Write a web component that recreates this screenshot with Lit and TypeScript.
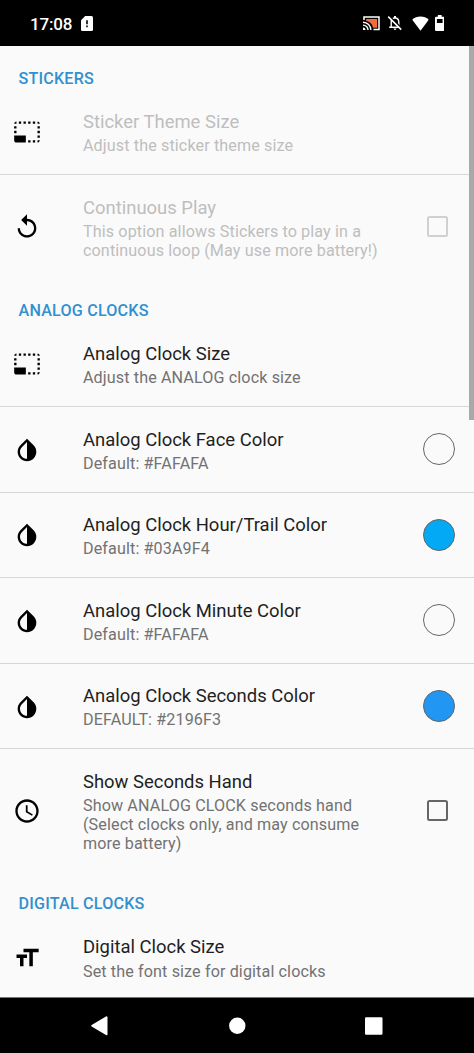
import { LitElement, html, css, nothing } from "lit";
import { customElement, property } from "lit/decorators.js";
import { classMap } from "lit/directives/class-map.js";
import { styleMap } from "lit/directives/style-map.js";

const ICONS: Record<string, string> = {
  size: "M23 15h-2v2h2v-2zm0-4h-2v2h2v-2zm0 8h-2v2c1 0 2-1 2-2zM15 3h-2v2h2V3zm8 4h-2v2h2V7zm-2-4v2h2c0-1-1-2-2-2zM3 21h8v-6H1v4c0 1.1.9 2 2 2zM3 7H1v2h2V7zm12 12h-2v2h2v-2zm4-16h-2v2h2V3zm0 16h-2v2h2v-2zM3 3C2 3 1 4 1 5h2V3zm0 8H1v2h2v-2zm8-8H9v2h2V3zM7 3H5v2h2V3z",
  replay: "M12 5V1L7 6l5 5V7c3.31 0 6 2.69 6 6s-2.69 6-6 6-6-2.69-6-6H4c0 4.42 3.58 8 8 8s8-3.58 8-8-3.58-8-8-8z",
  drop: "M17.66 7.93L12 2.27 6.34 7.93c-3.12 3.12-3.12 8.19 0 11.31C7.9 20.8 9.95 21.58 12 21.58s4.1-.78 5.66-2.34c3.12-3.12 3.12-8.19 0-11.31zM12 19.59c-1.6 0-3.11-.62-4.24-1.76C6.62 16.69 6 15.19 6 13.59s.62-3.11 1.76-4.24L12 5.1v14.49z",
  clock: "M11.99 2C6.47 2 2 6.48 2 12s4.47 10 9.99 10C17.52 22 22 17.52 22 12S17.52 2 11.99 2zM12 20c-4.42 0-8-3.58-8-8s3.58-8 8-8 8 3.58 8 8-3.58 8-8 8zm.5-13H11v6l5.25 3.15.75-1.23-4.5-2.67z",
  text: "M9 4v3h5v12h3V7h5V4H9zm-6 8h3v7h3v-7h3V9H3v3z",
};

interface Pref {
  icon: string;
  title: string;
  lines: string[];
  disabled?: boolean;
  checkbox?: boolean;
  color?: string;
}

const SECTIONS: { name: string; prefs: Pref[] }[] = [
  {
    name: "STICKERS",
    prefs: [
      { icon: "size", title: "Sticker Theme Size", lines: ["Adjust the sticker theme size"], disabled: true },
      {
        icon: "replay",
        title: "Continuous Play",
        lines: ["This option allows Stickers to play in a", "continuous loop (May use more battery!)"],
        disabled: true,
        checkbox: true,
      },
    ],
  },
  {
    name: "ANALOG CLOCKS",
    prefs: [
      { icon: "size", title: "Analog Clock Size", lines: ["Adjust the ANALOG clock size"] },
      { icon: "drop", title: "Analog Clock Face Color", lines: ["Default: #FAFAFA"], color: "#fafafa" },
      { icon: "drop", title: "Analog Clock Hour/Trail Color", lines: ["Default: #03A9F4"], color: "#03a9f4" },
      { icon: "drop", title: "Analog Clock Minute Color", lines: ["Default: #FAFAFA"], color: "#fafafa" },
      { icon: "drop", title: "Analog Clock Seconds Color", lines: ["DEFAULT: #2196F3"], color: "#2196f3" },
      {
        icon: "clock",
        title: "Show Seconds Hand",
        lines: ["Show ANALOG CLOCK seconds hand", "(Select clocks only, and may consume", "more battery)"],
        checkbox: true,
      },
    ],
  },
  {
    name: "DIGITAL CLOCKS",
    prefs: [{ icon: "text", title: "Digital Clock Size", lines: ["Set the font size for digital clocks"] }],
  },
];

@customElement("pref-row")
export class PrefRow extends LitElement {
  @property({ attribute: false }) pref!: Pref;

  static styles = css`
    :host { display: block; }
    .row {
      box-sizing: border-box;
      display: grid;
      grid-template-columns: 69.4px 1fr auto;
      align-items: center;
      padding: 20.5px 19px 18.9px 13.6px;
    }
    .icon { width: 28px; height: 28px; display: block; fill: #000; margin: 0 0 1.6px -0.2px; }
    .title { font-size: 18.45px; line-height: 25px; color: #1f1f1f; white-space: nowrap; }
    .line { font-size: 16.14px; line-height: 19.2px; letter-spacing: 0.12px; color: #727272; white-space: nowrap; }
    .summary { padding-top: 1.2px; }
    .text { padding-bottom: 0.8px; }
    .disabled .title, .disabled .line { color: #bebebe; }
    .swatch { box-sizing: border-box; width: 32px; height: 32px; margin-bottom: 3px; border: 1.5px solid #666; border-radius: 50%; }
    .box { box-sizing: border-box; width: 21px; height: 21px; margin: 0 7.5px 3px 0; border: 2px solid #666; border-radius: 2.5px; }
    .disabled .box { border-color: #d0d0d0; }
  `;

  render() {
    const p = this.pref;
    return html`<div class=${classMap({ row: true, disabled: !!p.disabled })}>
      <svg class="icon" viewBox="0 0 24 24"><path d=${ICONS[p.icon]} /></svg>
      <div class="text">
        <div class="title">${p.title}</div>
        <div class="summary">${p.lines.map((l) => html`<div class="line">${l}</div>`)}</div>
      </div>
      ${p.checkbox ? html`<div class="box"></div>` : nothing}
      ${p.color ? html`<div class="swatch" style=${styleMap({ backgroundColor: p.color })}></div>` : nothing}
    </div>`;
  }
}

@customElement("status-bar")
export class StatusBar extends LitElement {
  static styles = css`
    :host {
      display: flex;
      align-items: center;
      box-sizing: border-box;
      height: 46px;
      padding: 0 30px 0 30px;
      background: #000;
      color: #fff;
    }
    .time { font-size: 17px; font-weight: 500; line-height: 20px; letter-spacing: -0.2px; padding-top: 1px; }
    .sim { width: 12px; height: 15px; margin-left: 9px; }
    .tray { display: flex; align-items: center; margin-left: auto; }
    .cast { width: 17px; height: 15px; margin-right: 7px; }
    .bell { width: 16px; height: 16px; margin-right: 9px; }
    .wifi { width: 17px; height: 15px; margin-right: 6px; }
    .battery { width: 9.5px; height: 16px; }
    svg { display: block; }
  `;

  render() {
    return html`
      <span class="time">17:08</span>
      <svg class="sim" viewBox="0 0 12 15">
        <path d="M4.2 0H10.5Q12 0 12 1.5V13.5Q12 15 10.5 15H1.5Q0 15 0 13.5V4.2z" fill="#fff" />
        <path d="M5.2 4.2h1.6v4H5.2zM5.2 9.6h1.6v1.7H5.2z" fill="#000" />
      </svg>
      <div class="tray">
        <svg class="cast" viewBox="0 0 17 15">
          <path d="M1 4V1h15v12.5H10.5" fill="none" stroke="#fff" stroke-width="1.5" />
          <path d="M3.2 3h10.9v8.7H10C9.4 8 7 5.6 3.2 5z" fill="#f26a3d" />
          <g fill="none" stroke="#fff" stroke-width="1.4">
            <path d="M0 6.2A7.9 7.9 0 0 1 7.9 14.1M0 9.1A5 5 0 0 1 5 14.1" />
          </g>
          <path d="M0 11.6A2.5 2.5 0 0 1 2.5 14.1H0z" fill="#fff" />
        </svg>
        <svg class="bell" viewBox="0 0 16 16">
          <path d="M4.2 12V7.2C4.2 4.7 5.8 3 8 3s3.8 1.7 3.8 4.2V12M2.2 12.3h11.4" fill="none" stroke="#fff" stroke-width="1.4" />
          <path d="M7 1h2v2H7zM6.6 13.6h2.8a1.4 1.4 0 0 1-2.8 0z" fill="#fff" />
          <path d="M2.2.9l13 13" stroke="#000" stroke-width="1.5" />
          <path d="M1.2 1.6l13 13" stroke="#fff" stroke-width="1.5" />
        </svg>
        <svg class="wifi" viewBox="0 0 18 15" preserveAspectRatio="none">
          <path d="M9 14.8L.3 3.8C2.6 1.7 5.6.6 9 .6s6.4 1.1 8.7 3.2z" fill="#fff" />
        </svg>
        <svg class="battery" viewBox="0 0 10 16" preserveAspectRatio="none">
          <path d="M3 0h4v1.7h1.8Q10 1.7 10 2.9V14.8Q10 16 8.8 16H1.2Q0 16 0 14.8V2.9Q0 1.7 1.2 1.7H3z" fill="#fff" />
          <path d="M2 4h6v4H2z" fill="#000" />
        </svg>
      </div>
    `;
  }
}

@customElement("nav-bar")
export class NavBar extends LitElement {
  static styles = css`
    :host {
      display: grid;
      grid-template-columns: 168px 138px 168px;
      align-items: center;
      box-sizing: border-box;
      height: 56px;
      padding-top: 1px;
      border-top: 1px solid #777;
      background: #000;
    }
    svg { display: block; width: 20px; height: 20px; fill: #fff; justify-self: center; }
    .back { justify-self: start; margin-left: 89px; }
    .recent { justify-self: start; margin-left: 58px; }
  `;

  render() {
    return html`
      <svg class="back" viewBox="0 0 20 20"><path d="M17 .4Q18.5 0 18.5 1.5V18.3Q18.5 19.7 17 19.1L2.6 10.6Q1.6 9.8 2.6 9z" /></svg>
      <svg viewBox="0 0 20 20"><circle cx="10.3" cy="9.8" r="8.2" /></svg>
      <svg class="recent" viewBox="0 0 20 20"><rect x="1" y="1.2" width="17.5" height="17.5" rx="1.2" /></svg>
    `;
  }
}

@customElement("app-root")
export class AppRoot extends LitElement {
  static styles = css`
    :host {
      display: flex;
      flex-direction: column;
      position: relative;
      height: 1053px;
      overflow: hidden;
      background: #fafafa;
      font-family: Roboto, "Noto Sans", sans-serif;
    }
    .list { flex: 1; min-height: 0; overflow: hidden; padding-top: 1.9px; }
    .category {
      box-sizing: border-box;
      height: 41.6px;
      padding: 20.8px 0 0 18.5px;
      font-size: 16.14px;
      line-height: 20px;
      font-weight: 500;
      letter-spacing: 0.2px;
      color: #3390cf;
    }
    .divider { height: 1px; margin-top: -1px; background: #d6d6d6; }
    .thumb { position: absolute; top: 46px; right: 0; width: 5px; height: 374px; background: #a9a9a9; }
  `;

  render() {
    return html`
      <status-bar></status-bar>
      <div class="list">
        ${SECTIONS.map(
          (s) => html`<div class="category">${s.name}</div>
            ${s.prefs.map(
              (p, i) => html`<pref-row .pref=${p}></pref-row>
                ${i < s.prefs.length - 1 ? html`<div class="divider"></div>` : nothing}`,
            )}`,
        )}
      </div>
      <nav-bar></nav-bar>
      <div class="thumb"></div>
    `;
  }
}
